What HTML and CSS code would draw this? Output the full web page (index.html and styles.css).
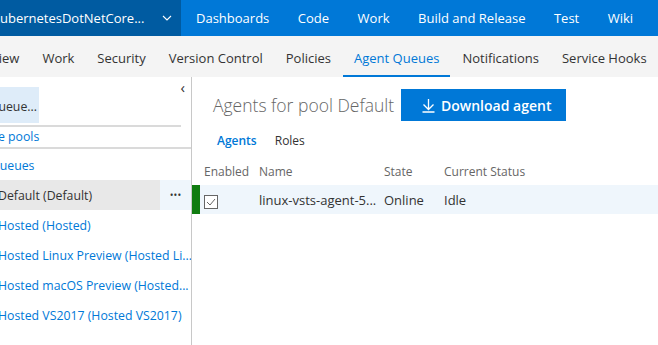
FILE: index.html
```html
<!DOCTYPE html>
<html lang="en">

<head>
    <meta charset="UTF-8">
    <meta name="viewport" content="width=device-width, initial-scale=1.0">
    <title>Agent Queues</title>
    <link rel="stylesheet" href="styles.css">
</head>

<body>

    <div class="top-bar">
        <div class="project">
            <span class="project-name">KubernetesDotNetCore...</span>
            <svg class="chevron" width="10" height="6" viewBox="0 0 10 6">
                <path d="M1 1 L5 5 L9 1" fill="none" stroke="#fff" stroke-width="1.1" />
            </svg>
        </div>
        <nav class="hub-nav">
            <a>Dashboards</a>
            <a>Code</a>
            <a>Work</a>
            <a>Build and Release</a>
            <a>Test</a>
            <a>Wiki</a>
        </nav>
    </div>

    <div class="admin-bar">
        <a class="clip">Overview</a>
        <a>Work</a>
        <a>Security</a>
        <a>Version Control</a>
        <a>Policies</a>
        <a class="active">Agent Queues</a>
        <a>Notifications</a>
        <a>Service Hooks</a>
    </div>

    <div class="main">
        <div class="side">
            <div class="collapse">&lsaquo;</div>
            <div class="side-top">
                <div class="new-queue"><span>New queue...</span></div>
            </div>
            <div class="manage"><span>Manage pools</span></div>
            <div class="tree">
                <div class="tree-head"><span>All queues</span></div>
                <div class="tree-row selected">
                    <span class="row-text">Default (Default)</span>
                    <span class="more">&bull;&bull;&bull;</span>
                </div>
                <div class="tree-row"><span class="row-text">Hosted (Hosted)</span></div>
                <div class="tree-row"><span class="row-text">Hosted Linux Preview (Hosted Li...</span></div>
                <div class="tree-row"><span class="row-text">Hosted macOS Preview (Hosted...</span></div>
                <div class="tree-row"><span class="row-text">Hosted VS2017 (Hosted VS2017)</span></div>
            </div>
        </div>

        <div class="content">
            <div class="title-row">
                <h1>Agents for pool Default</h1>
                <button class="download">
                    <svg width="13" height="15" viewBox="0 0 13 15">
                        <path d="M6.5 1 V11 M1.5 6.5 L6.5 11.5 L11.5 6.5 M0.5 14 H12.5" fill="none" stroke="#fff" stroke-width="1.3" />
                    </svg>
                    Download agent
                </button>
            </div>
            <div class="tabs">
                <a class="active">Agents</a>
                <a>Roles</a>
            </div>
            <div class="grid">
                <div class="grid-head">
                    <span class="c-enabled">Enabled</span>
                    <span class="c-name">Name</span>
                    <span class="c-state">State</span>
                    <span class="c-status">Current Status</span>
                </div>
                <div class="grid-row">
                    <span class="c-enabled">
                        <span class="check">
                            <svg width="10" height="8" viewBox="0 0 10 8">
                                <path d="M1 4 L4 7 L9 1" fill="none" stroke="#666" stroke-width="1" />
                            </svg>
                        </span>
                    </span>
                    <span class="c-name">linux-vsts-agent-5...</span>
                    <span class="c-state">Online</span>
                    <span class="c-status">Idle</span>
                </div>
            </div>
        </div>
    </div>

</body>

</html>
```

FILE: styles.css
```css
body {
    margin: 0;
    font-family: "Open Sans", "Noto Sans", sans-serif;
    font-size: 13px;
    color: #333;
    background-color: white;
    overflow: hidden;
}

a {
    cursor: pointer;
}

.top-bar {
    display: flex;
    height: 36px;
    background-color: #0078d7;
    color: white;
}

.project {
    width: 181px;
    flex-shrink: 0;
    display: flex;
    align-items: center;
    background-color: #005ba1;
    overflow: hidden;
}

.project-name {
    margin-left: -8px;
    font-size: 13px;
    white-space: nowrap;
}

.chevron {
    margin-left: auto;
    margin-right: 9px;
    flex-shrink: 0;
}

.hub-nav {
    display: flex;
    align-items: center;
    gap: 28.5px;
    padding-left: 15px;
    font-size: 13px;
    white-space: nowrap;
}

.admin-bar {
    display: flex;
    gap: 23px;
    height: 41px;
    background-color: #f4f4f4;
    font-size: 13px;
    white-space: nowrap;
    overflow: hidden;
}

.admin-bar a {
    position: relative;
    height: 38px;
    padding-top: 3px;
    line-height: 38px;
}

.admin-bar .clip {
    margin-left: -37px;
}

.admin-bar .active {
    color: #0078d7;
}

.admin-bar .active::after {
    content: "";
    position: absolute;
    left: -11px;
    right: -11px;
    bottom: 0;
    height: 2px;
    background-color: #0078d7;
}

.main {
    display: flex;
    height: 268px;
}

.side {
    position: relative;
    width: 191px;
    flex-shrink: 0;
    border-right: 1px solid #c8c8c8;
    overflow: hidden;
    font-size: 12.3px;
}

.collapse {
    position: absolute;
    right: 6px;
    top: 0;
    font-size: 15px;
    color: #333;
}

.side-top {
    width: 181px;
    padding-top: 10px;
    padding-bottom: 2px;
    border-bottom: 2px solid #dadada;
}

.new-queue {
    width: 39px;
    height: 36px;
    display: flex;
    align-items: center;
    background-color: #deecf9;
    overflow: hidden;
    white-space: nowrap;
}

.new-queue span {
    margin-left: -38px;
    padding-top: 3px;
}

.manage {
    height: 20px;
    line-height: 20px;
    border-bottom: 2px solid #dadada;
    color: #0078d7;
    white-space: nowrap;
}

.manage span {
    margin-left: -41px;
}

.tree-head {
    height: 31px;
    line-height: 34px;
    color: #0078d7;
    white-space: nowrap;
}

.tree-head span {
    margin-left: -25px;
}

.tree-row {
    display: flex;
    align-items: center;
    height: 30px;
    color: #0078d7;
    white-space: nowrap;
}

.row-text {
    margin-left: -2px;
    flex: 1;
    overflow: hidden;
}

.tree-row.selected {
    color: #333;
    background-color: #e8e8e8;
}

.more {
    width: 31px;
    height: 30px;
    line-height: 30px;
    text-align: center;
    background-color: #eff6fc;
    font-size: 10px;
    color: #333;
}

.content {
    flex: 1;
}

.title-row {
    display: flex;
    align-items: center;
    padding: 12px 0 0 21px;
}

.title-row h1 {
    margin: 0;
    width: 188px;
    font-size: 17.5px;
    font-weight: 300;
    color: #666;
    white-space: nowrap;
}

.download {
    display: flex;
    align-items: center;
    gap: 6px;
    width: 165px;
    height: 32px;
    padding: 0 0 0 21px;
    border: none;
    background-color: #0078d7;
    color: white;
    font-family: inherit;
    font-size: 14px;
    font-weight: 600;
}

.tabs {
    display: flex;
    gap: 18px;
    padding: 11px 0 0 25px;
    height: 21px;
    font-size: 12px;
    color: #333;
}

.tabs .active {
    color: #0078d7;
    font-weight: 600;
}

.grid {
    margin-top: 4px;
}

.grid-head,
.grid-row {
    display: flex;
    align-items: center;
    white-space: nowrap;
}

.grid-head {
    height: 28px;
    font-size: 12px;
    color: #666;
}

.grid-row {
    height: 29px;
    background-color: #eff6fc;
    border-left: 8px solid #107c10;
    font-size: 13px;
}

.c-enabled {
    width: 55px;
    padding-left: 12px;
    flex-shrink: 0;
}

.grid-row .c-enabled {
    padding-left: 4px;
}

.c-name {
    width: 125px;
}

.c-state {
    width: 60px;
}

.check {
    display: flex;
    align-items: center;
    justify-content: center;
    width: 12px;
    height: 12px;
    margin-top: 4px;
    border: 1px solid #666;
    background-color: white;
}
```
